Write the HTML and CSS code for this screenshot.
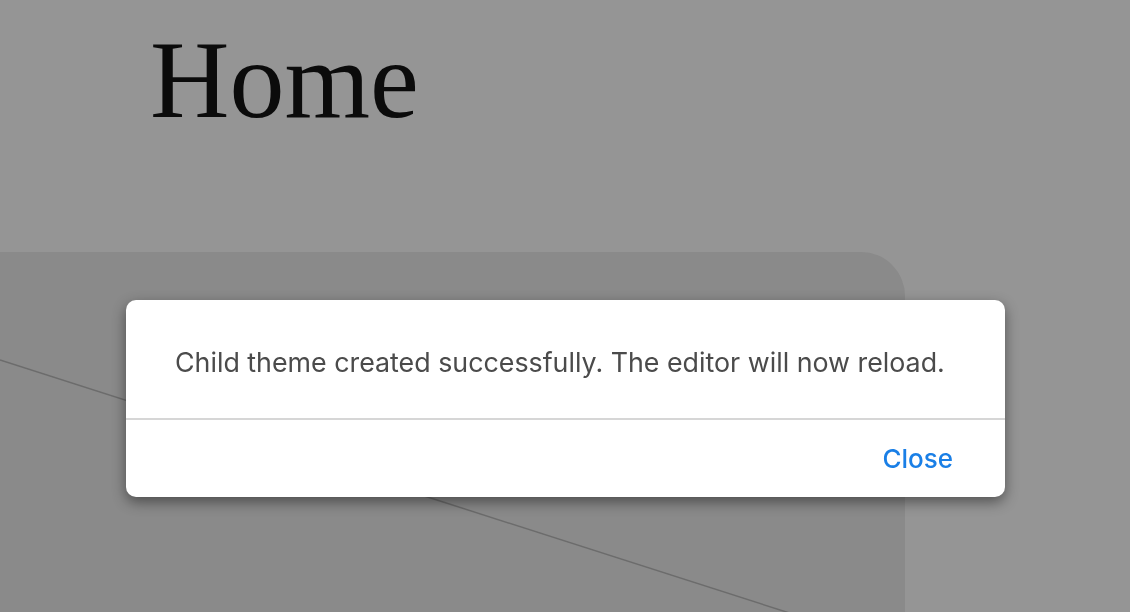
FILE: index.html
```html
<!DOCTYPE html>
<html lang="en">
<head>
    <meta charset="UTF-8">
    <meta name="viewport" content="width=device-width, initial-scale=1.0">
    <title>Home</title>
    <link rel="stylesheet" href="styles.css">
</head>
<body>

    <div class="page">
        <h1 class="title">Home</h1>

        <div class="card">
            <svg class="card-line" viewBox="0 0 905 400" preserveAspectRatio="none">
                <line x1="0" y1="108" x2="905" y2="398" stroke="#6c6c6c" stroke-width="1.5" />
            </svg>
        </div>
    </div>

    <div class="overlay">
        <div class="dialog">
            <p class="dialog-message">Child theme created successfully. The editor will now reload.</p>
            <div class="dialog-actions">
                <button class="dialog-close">Close</button>
            </div>
        </div>
    </div>

</body>
</html>
```

FILE: styles.css
```css
* {
    margin: 0;
    padding: 0;
    box-sizing: border-box;
}

html, body {
    height: 100%;
    overflow: hidden;
}

body {
    background: #959595;
    font-family: 'Inter', 'Liberation Sans', sans-serif;
}

.page {
    padding-top: 25px;
}

.title {
    font-family: 'Liberation Serif', serif;
    font-weight: 400;
    font-size: 110px;
    line-height: 1;
    color: #0b0b0b;
    padding-left: 150px;
}

.card {
    position: relative;
    margin-top: 117px;
    width: 905px;
    height: 360px;
    background: #8a8a8a;
    border-top-right-radius: 44px;
    overflow: hidden;
}

.card-line {
    position: absolute;
    inset: 0;
    width: 905px;
    height: 400px;
}

.overlay {
    position: fixed;
    inset: 0;
}

.dialog {
    position: absolute;
    left: 126px;
    top: 300px;
    width: 879px;
    background: #fff;
    border-radius: 10px;
    box-shadow: 0 5px 14px rgba(0, 0, 0, 0.45);
    overflow: hidden;
}

.dialog-message {
    height: 120px;
    display: flex;
    align-items: center;
    padding: 6px 49px 0;
    font-size: 26.8px;
    color: #4b4b4b;
    border-bottom: 2px solid #d6d6d6;
}

.dialog-actions {
    height: 77px;
    display: flex;
    justify-content: flex-end;
    align-items: center;
    padding-right: 52px;
}

.dialog-close {
    border: none;
    background: none;
    font-family: 'Inter', 'Liberation Sans', sans-serif;
    font-size: 26px;
    font-weight: 500;
    color: #1a7fe6;
    cursor: pointer;
}
```
